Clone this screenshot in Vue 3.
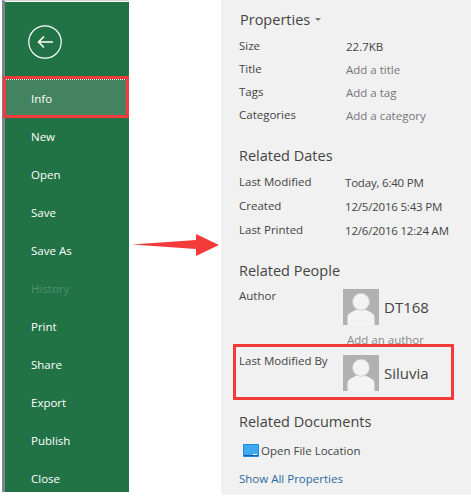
<script setup>
const navItems = [
  { label: 'Info', active: true },
  { label: 'New' },
  { label: 'Open' },
  { label: 'Save' },
  { label: 'Save As' },
  { label: 'History', disabled: true },
  { label: 'Print' },
  { label: 'Share' },
  { label: 'Export' },
  { label: 'Publish' },
  { label: 'Close' }
]
const properties = [
  { label: 'Size', value: '22.7KB', dark: true },
  { label: 'Title', value: 'Add a title' },
  { label: 'Tags', value: 'Add a tag' },
  { label: 'Categories', value: 'Add a category' }
]
const dates = [
  { label: 'Last Modified', value: 'Today, 6:40 PM' },
  { label: 'Created', value: '12/5/2016 5:43 PM' },
  { label: 'Last Printed', value: '12/6/2016 12:24 AM' }
]
</script>

<template>
  <div class="page">
    <aside class="rail">
      <nav class="sidebar">
        <div class="back">
          <svg class="back-icon" width="34" height="34" viewBox="0 0 34 34" fill="none" stroke="#fff">
            <circle cx="17" cy="17" r="16.2" stroke-width="1.2" />
            <path d="M25 17H10.500M16 11.500 10.500 17 16 22.500" stroke-width="1.600" />
          </svg>
        </div>
        <div
          v-for="item in navItems"
          :key="item.label"
          class="nav-item"
          :class="{ active: item.active, disabled: item.disabled }"
        >{{ item.label }}</div>
      </nav>
    </aside>

    <main class="panel">
      <h2 class="heading first">Properties <span class="caret"></span></h2>
      <div class="rows props">
        <div v-for="row in properties" :key="row.label" class="row">
          <span class="label">{{ row.label }}</span>
          <span class="value" :class="row.dark ? 'dark' : 'muted'">{{ row.value }}</span>
        </div>
      </div>

      <h2 class="heading dates-heading">Related Dates</h2>
      <div class="rows dates">
        <div v-for="row in dates" :key="row.label" class="row">
          <span class="label">{{ row.label }}</span>
          <span class="value dark date-value">{{ row.value }}</span>
        </div>
      </div>

      <h2 class="heading people-heading">Related People</h2>
      <div class="person author">
        <span class="label">Author</span>
        <div class="person-info">
          <svg class="avatar" width="36" height="36" viewBox="0 0 36 36">
            <rect width="36" height="36" fill="#b1b1b1" />
            <path d="M4.500 36V28C4.500 24.500 9 23 13.500 20.500H22.500C27 23 31.500 24.500 31.500 28V36Z" fill="#f3f3f3" />
            <circle cx="18" cy="12.800" r="8.500" fill="#f3f3f3" stroke="#c9c9c9" stroke-width="0.800" />
          </svg>
          <span class="person-name">DT168</span>
        </div>
      </div>
      <div class="add-author">Add an author</div>
      <div class="person modified">
        <span class="label">Last Modified By</span>
        <div class="person-info">
          <svg class="avatar" width="36" height="36" viewBox="0 0 36 36">
            <rect width="36" height="36" fill="#b1b1b1" />
            <path d="M4.500 36V28C4.500 24.500 9 23 13.500 20.500H22.500C27 23 31.500 24.500 31.500 28V36Z" fill="#f3f3f3" />
            <circle cx="18" cy="12.800" r="8.500" fill="#f3f3f3" stroke="#c9c9c9" stroke-width="0.800" />
          </svg>
          <span class="person-name">Siluvia</span>
        </div>
      </div>

      <h2 class="heading docs-heading">Related Documents</h2>
      <div class="file-link">
        <svg width="16" height="13" viewBox="0 0 16 13">
          <rect width="16" height="13" rx="1" fill="#1c8ae0" />
          <rect x="1" y="1" width="14" height="10" fill="#3fa9f0" />
          <path d="M1 11h14v1H1z" fill="#0b5ea8" />
          <path d="M10 10.500h4" stroke="#fff" stroke-width="1" />
        </svg>
        <span>Open File Location</span>
      </div>
      <a class="show-all">Show All Properties</a>
    </main>

    <div class="mark mark-info"></div>
    <div class="mark mark-modified"></div>
    <svg class="arrow" width="90" height="24" viewBox="0 0 90 24">
      <path d="M1 11.500 65 7V1L88 12 65 23V16Z" fill="#f33b3b" />
    </svg>
  </div>
</template>

<style>
html, body { margin: 0; background: #fff; }
</style>

<style scoped>
.page {
  position: relative;
  display: flex;
  justify-content: space-between;
  width: 471px;
  height: 496px;
  overflow: hidden;
  background: #fff;
  font-family: "Open Sans", "Noto Sans", sans-serif;
  font-size: 11.5px;
  color: #444;
}
.rail {
  width: 127px;
  height: 492px;
  margin-left: 2px;
  padding-top: 1px;
  border-top: 1px solid #d4d4d4;
  border-left: 3px solid #7f858c;
  box-sizing: border-box;
}
.sidebar {
  height: 490px;
  background: #217346;
  color: #fff;
  box-sizing: border-box;
}
.back {
  height: 78px;
  padding: 23px 0 0 23px;
  box-sizing: border-box;
}
.back-icon { display: block; }
.nav-item {
  height: 38px;
  padding-left: 26px;
  line-height: 38px;
}
.nav-item.active {
  position: relative;
  background: #43835f;
}
.nav-item.active::before {
  content: "";
  position: absolute;
  top: -1px;
  left: 0;
  right: 0;
  border-top: 1px dotted #fff;
}
.nav-item.disabled { color: #4f8f6b; }

.panel {
  width: 250px;
  height: 495px;
  padding: 0 0 0 18px;
  box-sizing: border-box;
  background: #f1f1f1;
}
.heading {
  margin: 0;
  font-size: 14.5px;
  font-weight: 400;
  line-height: 20px;
  color: #444;
}
.heading.first { padding: 10px 0 0 1px; }
.caret {
  display: inline-block;
  margin: 0 0 4px 1px;
  border: 3px solid transparent;
  border-top-color: #777;
  border-bottom-width: 0;
}
.rows { display: flex; flex-direction: column; }
.props { padding-top: 4px; }
.props .row { height: 23px; }
.dates { padding-top: 3px; }
.dates .row { height: 24px; }
.row {
  display: flex;
  align-items: center;
}
.label { width: 107px; flex: none; }
.value { transform: translateY(1px); }
.date-value { margin-left: -1px; letter-spacing: -0.2px; }
.dark { color: #444; }
.muted { color: #75757a; }
.dates-heading { margin-top: 20px; }
.people-heading { margin-top: 20px; }
.person { display: flex; }
.person-info { display: flex; align-items: center; gap: 5px; }
.avatar { display: block; flex: none; }
.person-name { font-size: 15px; color: #444; }
.person .label { width: 104px; line-height: 14px; }
.person.author { padding-top: 8px; }
.add-author {
  margin: 7px 0 0 107px;
  line-height: 16px;
  padding-left: 1px;
  color: #8a8a8a;
}
.person.modified { margin-top: 7px; }
.person.modified .label { line-height: 12px; }
.docs-heading { margin-top: 21px; }
.file-link {
  display: flex;
  align-items: center;
  gap: 2px;
  height: 18px;
  margin: 9px 0 0 4px;
}
.show-all {
  display: block;
  margin-top: 11px;
  line-height: 18px;
  color: #2b6a9f;
}

.mark {
  position: absolute;
  box-sizing: border-box;
  border: 3px solid #f33b3b;
}
.mark-info { left: 3px; top: 76px; width: 126px; height: 42px; }
.mark-modified { left: 233px; top: 344px; width: 221px; height: 56px; }
.arrow { position: absolute; left: 131px; top: 233px; }
</style>
